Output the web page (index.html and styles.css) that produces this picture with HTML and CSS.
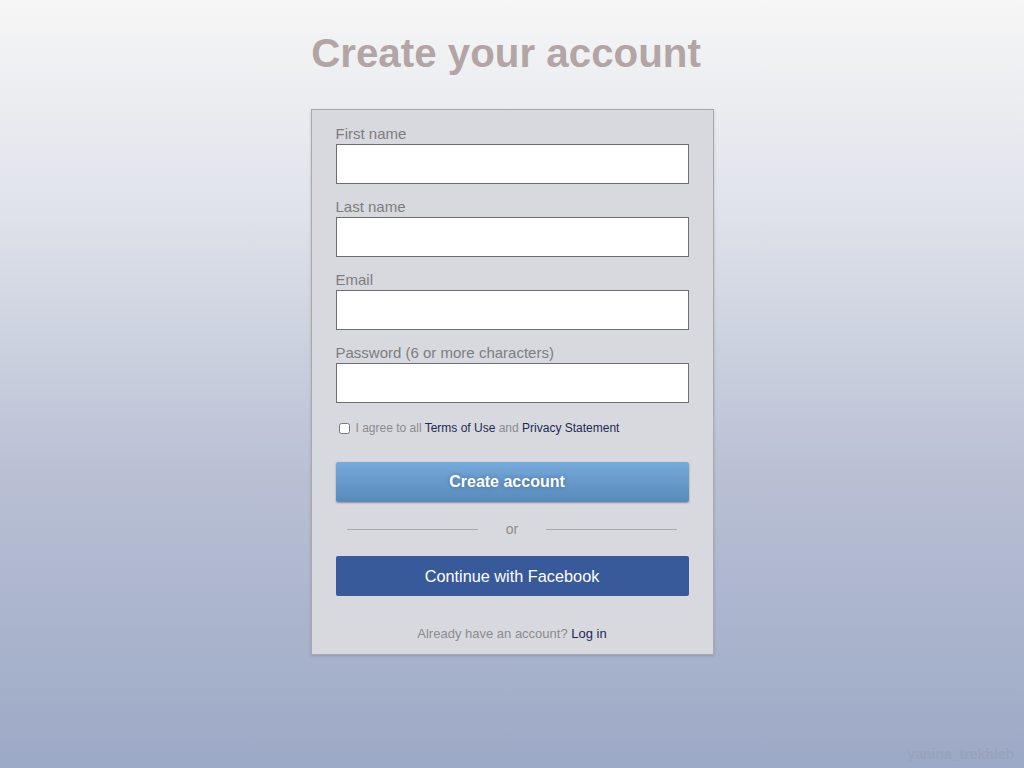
FILE: index.html
```html
<!DOCTYPE html>
<html>
<head>
    <meta charset="utf-8">
    <link rel="stylesheet" href="styles.css">
</head>
<body>
    <h1 class="title">Create your account</h1>

    <form class="card">
        <label class="field">
            <span>First name</span>
            <input type="text">
        </label>
        <label class="field">
            <span>Last name</span>
            <input type="text">
        </label>
        <label class="field">
            <span>Email</span>
            <input type="text">
        </label>
        <label class="field">
            <span>Password (6 or more characters)</span>
            <input type="password">
        </label>

        <label class="agree">
            <input type="checkbox">
            <span>I agree to all <a href="#">Terms of Use</a> and <a href="#">Privacy Statement</a></span>
        </label>

        <button type="button" class="btn-create">Create account</button>

        <div class="or">
            <span class="line"></span>
            <span>or</span>
            <span class="line"></span>
        </div>

        <button type="button" class="btn-fb">Continue with Facebook</button>

        <p class="login">Already have an account? <a href="#">Log in</a></p>
    </form>

    <div class="sign">yanina_trekhleb</div>
</body>
</html>
```

FILE: styles.css
```css
html {
    height: 100%;
}

body {
    margin: 0;
    min-height: 100%;
    font-family: "Liberation Sans", Arial, sans-serif;
    background: linear-gradient(to bottom, #f6f6f6 0%, #dfe2ea 28%, #b9c0d4 62%, #9ca9c6 100%);
    display: flex;
    flex-direction: column;
    align-items: center;
}

.title {
    margin: 30px 12px 0 0;
    font-size: 40.3px;
    font-weight: bold;
    color: #b3a5a5;
    line-height: 48px;
}

.card {
    margin-top: 31px;
    width: 353px;
    padding: 16px 24px 13px;
    background-color: #d8d9de;
    border: 1px solid #a9a9ab;
    box-shadow: 0 1px 3px rgba(0, 0, 0, 0.15);
    display: flex;
    flex-direction: column;
}

.field {
    display: flex;
    flex-direction: column;
    margin-bottom: 15px;
}

.field span {
    font-size: 15px;
    color: #7d7d80;
    line-height: 16px;
    margin-bottom: 2px;
}

.field input {
    margin: 0;
    height: 40px;
    box-sizing: border-box;
    border: 1px solid #6f6f70;
    background: white;
    padding: 0 8px;
}

.agree {
    display: flex;
    align-items: center;
    gap: 6px;
    font-size: 12px;
    color: #8b8b8e;
    margin: 3px 0 0 3px;
}

.agree input {
    margin: 0;
    width: 11px;
    height: 11px;
}

a {
    color: #1c2a54;
    text-decoration: none;
}

.btn-create {
    margin-top: 27px;
    height: 40px;
    border: none;
    border-radius: 2px;
    background: linear-gradient(to bottom, #76aadb, #588abb);
    box-shadow: 0 1px 2px rgba(0, 0, 0, 0.35);
    color: white;
    font-family: inherit;
    font-size: 16px;
    font-weight: bold;
    text-shadow: 0 0 4px rgba(40, 60, 100, 0.5);
    padding: 0 10px 0 0;
}

.or {
    display: flex;
    align-items: center;
    justify-content: center;
    gap: 28px;
    margin: 19px 0 19px;
    font-size: 14px;
    color: #8b8b8e;
}

.or .line {
    width: 131px;
    height: 1px;
    background-color: #aaa7a8;
}

.btn-fb {
    height: 40px;
    border: none;
    border-radius: 2px;
    background-color: #385a9b;
    color: white;
    font-family: inherit;
    font-size: 16.3px;
}

.login {
    margin: 30px 0 0;
    text-align: center;
    font-size: 13px;
    color: #8b8b8e;
}

.sign {
    position: absolute;
    right: 10px;
    bottom: 6px;
    font-size: 14px;
    font-weight: bold;
    color: #98a3be;
}
```
